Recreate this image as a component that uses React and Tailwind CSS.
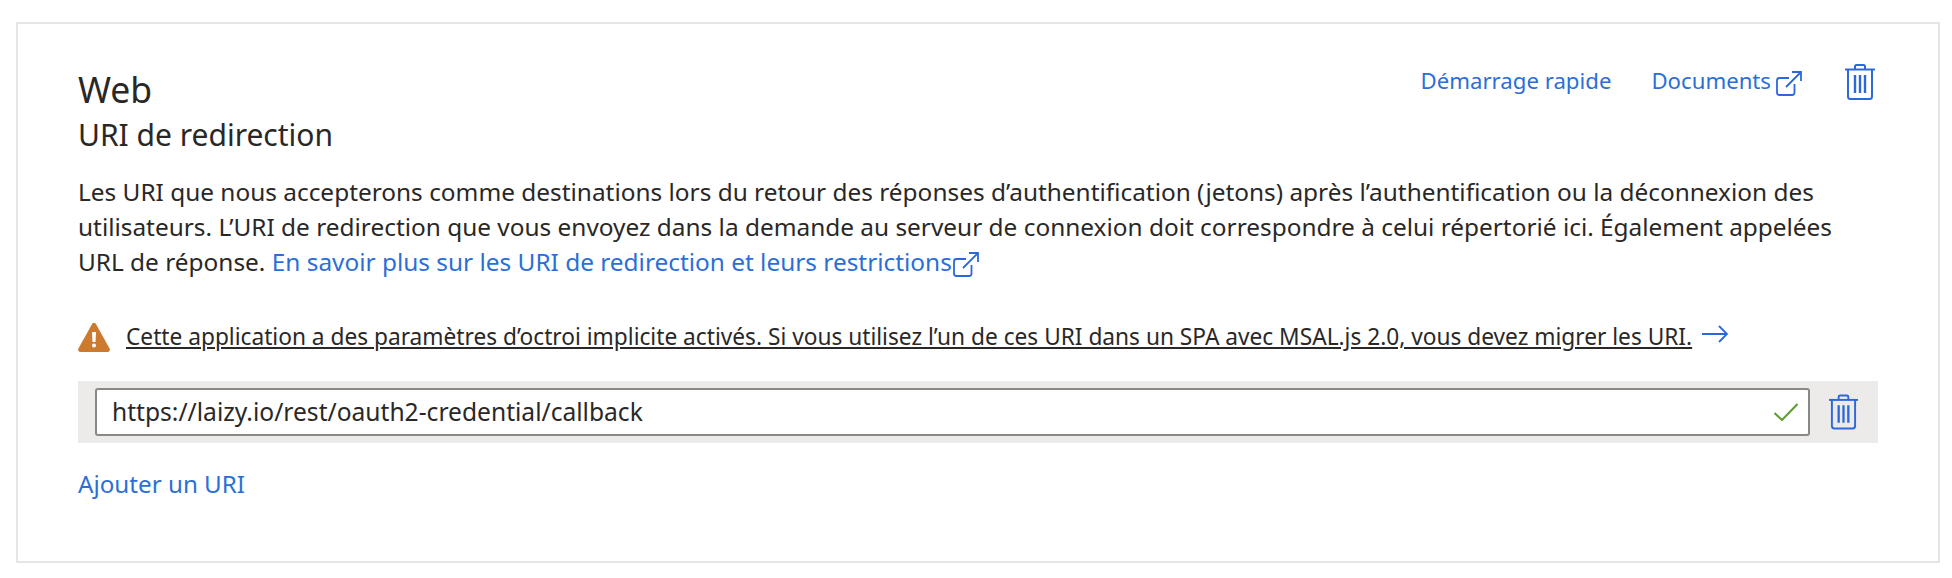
const font = "font-['Noto_Sans',sans-serif]"

function TrashIcon({ className }) {
  return (
    <svg viewBox="0 0 30 36" fill="none" stroke="currentColor" strokeWidth="2" className={className}>
      <path d="M0 5.5H30" />
      <path d="M10 5V2.5C10 1.5 10.6 1 11.5 1H18.5C19.4 1 20 1.5 20 2.5V5" />
      <path d="M3 5.5V32.5C3 34 4 35 5.5 35H24.5C26 35 27 34 27 32.5V5.5" />
      <path strokeWidth="2.4" d="M10 11V29M15 11V29M20 11V29" />
    </svg>
  )
}

function ExternalIcon({ className }) {
  return (
    <svg viewBox="0 0 26 25" fill="none" stroke="currentColor" strokeWidth="1.8" className={className}>
      <path d="M13 7H3.5C1.8 7 1 7.8 1 9.5V21.5C1 23.2 1.8 24 3.5 24H16C17.7 24 18.5 23.2 18.5 21.5V13" />
      <path d="M10 16L25 1M16 1H25V10" />
    </svg>
  )
}

function WarningIcon({ className }) {
  return (
    <svg viewBox="0 0 32 29" className={className}>
      <path fill="#cc7a2e" d="M16 0C17 0 17.7 0.5 18.2 1.4L31.6 25.6C32.4 27.2 31.5 29 29.6 29H2.4C0.5 29 -0.4 27.2 0.4 25.6L13.8 1.4C14.3 0.5 15 0 16 0Z" />
      <path fill="#fff" d="M14 9H18L17.5 19H14.5Z" />
      <circle fill="#fff" cx="16" cy="22.5" r="2" />
    </svg>
  )
}

export default function App() {
  return (
    <div className={`${font} min-h-screen bg-white pt-[22px] pl-[16px] pr-[12px] text-[#292827]`}>
      <div className="h-[541px] border-2 border-[#e5e5e5] pl-[60px] pr-[60px]">
        <div className="flex items-start justify-between">
          <div className="pt-[42px]">
            <h1 className="text-[35.5px] leading-[46px] font-normal">Web</h1>
            <h2 className="text-[30px] leading-[46px] font-normal">URI de redirection</h2>
          </div>
          <div className="flex items-start pt-[40px] pr-[3px] text-[22.2px] leading-[34px] text-[#2b6fd6]">
            <a className="mr-[40px]">Démarrage rapide</a>
            <a>Documents</a>
            <ExternalIcon className="ml-[5px] mt-[7px] h-[25px] w-[26px] text-[#2c68da]" />
            <TrashIcon className="ml-[43px] h-[36px] w-[30px] text-[#2c68da]" />
          </div>
        </div>
        <p className="mt-[16px] text-[24.4px] leading-[35px] whitespace-nowrap">
          Les URI que nous accepterons comme destinations lors du retour des réponses d’authentification (jetons) après l’authentification ou la déconnexion des
          <br />
          utilisateurs. L’URI de redirection que vous envoyez dans la demande au serveur de connexion doit correspondre à celui répertorié ici. Également appelées
          <br />
          URL de réponse. <a className="text-[#2b6fd6]">En savoir plus sur les URI de redirection et leurs restrictions</a>
          <ExternalIcon className="ml-[1px] inline-block h-[25px] w-[26px] align-[-6px] text-[#2c68da]" />
        </p>
        <div className="mt-[43px] flex items-center">
          <WarningIcon className="h-[29px] w-[32px]" />
          <a className="ml-[16px] text-[22.7px] leading-[30px] whitespace-nowrap underline">
            Cette application a des paramètres d’octroi implicite activés. Si vous utilisez l’un de ces URI dans un SPA avec MSAL.js 2.0, vous devez migrer les URI.
          </a>
          <svg viewBox="0 0 26 18" fill="none" stroke="#2c68da" strokeWidth="1.8" className="ml-[10px] mb-[6px] h-[18px] w-[26px]">
            <path d="M0 9H25M17 1L25 9L17 17" />
          </svg>
        </div>
        <div className="mt-[29px] flex h-[62px] items-center bg-[#edebe9] pl-[17px] pr-[20px]">
          <div className="flex h-[48px] flex-1 items-center justify-between rounded-[3px] border-2 border-[#8a8886] bg-white pl-[15px] pr-[10px]">
            <span className="text-[24.6px]">https://laizy.io/rest/oauth2-credential/callback</span>
            <svg viewBox="0 0 24 18" fill="none" stroke="#5c9e31" strokeWidth="2" className="h-[18px] w-[24px]">
              <path d="M0.5 10L8 17L23.5 1" />
            </svg>
          </div>
          <TrashIcon className="ml-[19px] h-[36px] w-[29px] text-[#2c68da]" />
        </div>
        <a className="mt-[25px] block text-[24.2px] leading-[32px] text-[#2b6fd6]">Ajouter un URI</a>
      </div>
    </div>
  )
}
